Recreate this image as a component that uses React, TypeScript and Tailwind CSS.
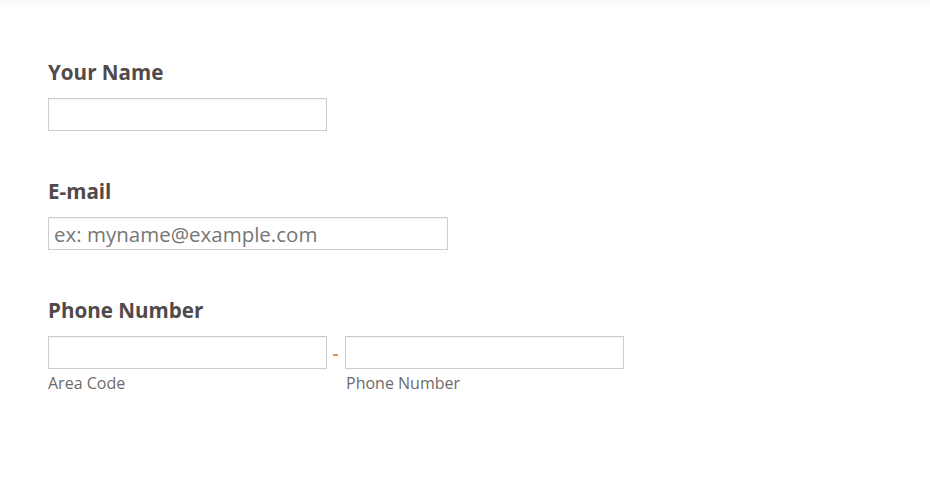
import React from "react";

export default function App() {
  const inputCls =
    "block h-[33px] border border-[#cdcdcd] bg-white px-[5px] text-[20.5px] text-[#555] outline-none placeholder:text-[#767676] shadow-[inset_0_1px_1px_rgba(0,0,0,0.05)]";
  return (
    <div
      className="w-[930px] h-[492px] bg-white relative"
      style={{ fontFamily: '"Open Sans", "Liberation Sans", sans-serif' }}
    >
      <div className="h-[6px] bg-[#fbfbfb]" />
      <div className="pl-[48px] pt-[54px]">
        <div>
          <label className="block h-[24px] leading-[24px] text-[20.6px] font-bold text-[#504a4a]">
            Your Name
          </label>
          <input className={inputCls + " mt-[14px] w-[279px]"} />
        </div>
        <div className="mt-[48px]">
          <label className="block h-[24px] leading-[24px] text-[20.6px] font-bold text-[#504a4a]">
            E-mail
          </label>
          <input
            className={inputCls + " mt-[14px] w-[400px]"}
            placeholder="ex: myname@example.com"
          />
        </div>
        <div className="mt-[48px]">
          <label className="block h-[24px] leading-[24px] text-[20.6px] font-bold text-[#504a4a]">
            Phone Number
          </label>
          <div className="mt-[14px] flex items-start">
            <div className="flex flex-col">
              <input className={inputCls + " w-[279px]"} />
              <span className="mt-[4px] h-[20px] leading-[20px] text-[16px] text-[#6f6b6b]">
                Area Code
              </span>
            </div>
            <div className="w-[18px] h-[33px] flex items-center justify-center pt-[4px] pr-px">
              <span className="block w-[5px] h-[2px] bg-[#e0914a]" />
            </div>
            <div className="flex flex-col">
              <input className={inputCls + " w-[279px]"} />
              <span className="mt-[4px] pl-px h-[20px] leading-[20px] text-[16px] text-[#6f6b6b]">
                Phone Number
              </span>
            </div>
          </div>
        </div>
      </div>
    </div>
  );
}
